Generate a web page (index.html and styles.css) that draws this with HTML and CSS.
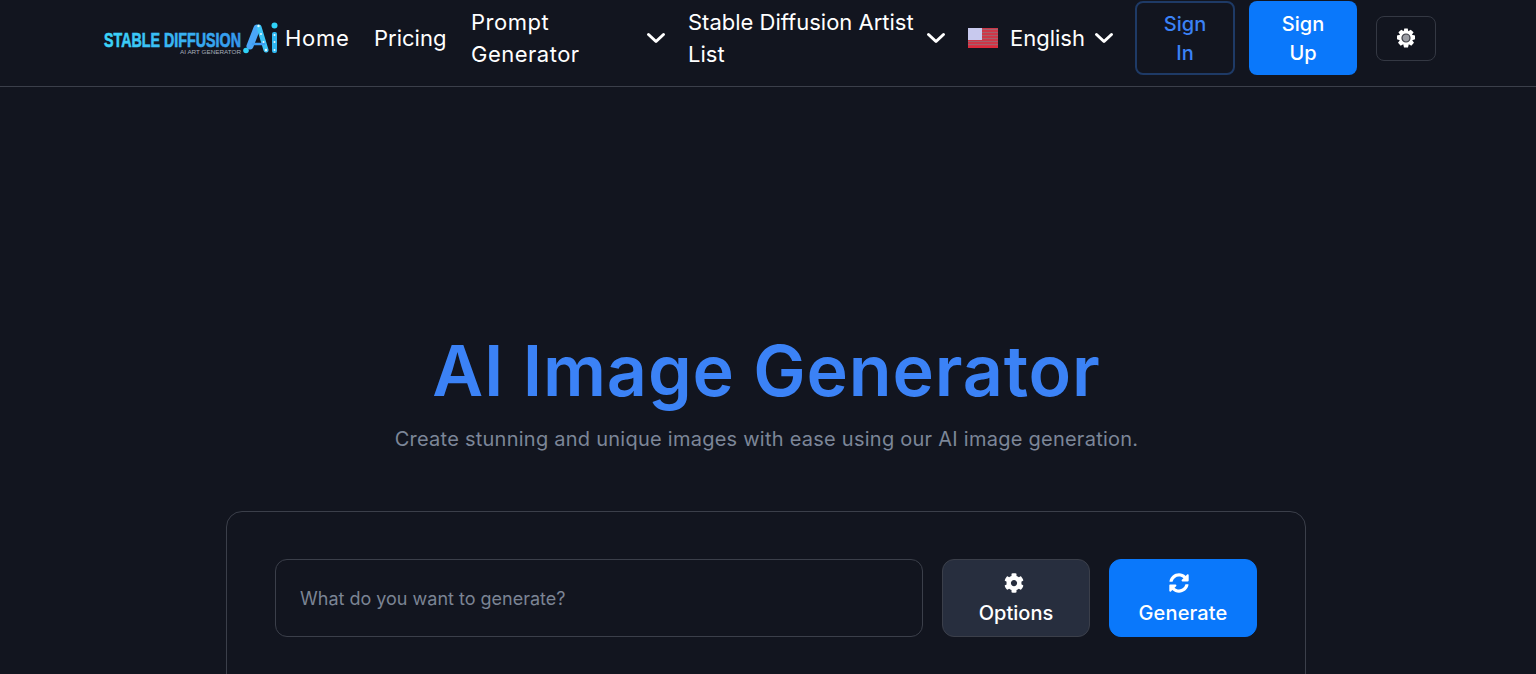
FILE: index.html
```html
<!DOCTYPE html>
<html lang="en">

<head>
  <meta charset="UTF-8">
  <meta name="viewport" content="width=device-width, initial-scale=1.0">
  <title>AI Image Generator</title>
  <link rel="stylesheet" href="styles.css">
</head>

<body>
  <svg class="icon-defs" width="0" height="0" aria-hidden="true">
    <symbol id="cog" viewBox="0 0 512 512">
      <path d="M487.4 315.7l-42.6-24.6c4.3-23.2 4.3-47 0-70.2l42.6-24.6c4.9-2.8 7.1-8.6 5.5-14-11.1-35.6-30-67.8-54.7-94.6-3.8-4.1-10-5.1-14.8-2.3L380.8 110c-17.9-15.4-38.5-27.3-60.8-35.1V25.8c0-5.6-3.9-10.5-9.4-11.7-36.7-8.2-74.3-7.8-109.2 0-5.5 1.2-9.4 6.1-9.4 11.7V75c-22.2 7.9-42.8 19.8-60.8 35.1L88.7 85.5c-4.9-2.8-11-1.9-14.8 2.3-24.7 26.7-43.6 58.9-54.7 94.6-1.7 5.4.6 11.2 5.5 14L67.3 221c-4.3 23.2-4.3 47 0 70.2l-42.6 24.6c-4.9 2.8-7.1 8.6-5.5 14 11.1 35.6 30 67.8 54.7 94.6 3.8 4.1 10 5.1 14.8 2.3l42.6-24.6c17.9 15.4 38.5 27.3 60.8 35.1v49.2c0 5.6 3.9 10.5 9.4 11.7 36.7 8.2 74.3 7.8 109.2 0 5.5-1.2 9.4-6.1 9.4-11.7v-49.2c22.2-7.9 42.8-19.8 60.8-35.1l42.6 24.6c4.9 2.8 11 1.9 14.8-2.3 24.7-26.7 43.6-58.9 54.7-94.6 1.5-5.5-.7-11.3-5.6-14.1zM256 336c-44.1 0-80-35.9-80-80s35.9-80 80-80 80 35.9 80 80-35.9 80-80 80z" fill="currentColor"/>
    </symbol>
    <symbol id="chevron" viewBox="0 0 20 12">
      <path d="M2.500 2.500L10 9.500L17.500 2.500" fill="none" stroke="currentColor" stroke-width="3" stroke-linecap="round" stroke-linejoin="round"/>
    </symbol>
  </svg>

  <header class="header">
    <a href="#" class="logo-link">
      <svg class="logo" viewBox="0 0 174 34" width="174" height="34" role="img" aria-label="Stable Diffusion AI">
        <defs>
          <linearGradient id="logo-fill" x1="0" y1="0" x2="137" y2="0" gradientUnits="userSpaceOnUse">
            <stop offset="0" stop-color="#3cd6f8"/>
            <stop offset="1" stop-color="#3598ee"/>
          </linearGradient>
        </defs>
        <text class="logo-title" transform="scale(1 1.310)" x="0" y="19.850" textLength="137" lengthAdjust="spacingAndGlyphs" fill="url(#logo-fill)" stroke="url(#logo-fill)">STABLE DIFFUSION</text>
        <text class="logo-sub" x="76" y="33" textLength="61" lengthAdjust="spacingAndGlyphs">AI ART GENERATOR</text>
        <path d="M153 7L146 25" class="logo-leg-left"/>
        <path d="M155 6L162 29" class="logo-leg-right"/>
        <path d="M149 23H160" class="logo-bar"/>
        <circle cx="154.500" cy="5" r="1.200" fill="#e8fbff"/>
        <circle cx="157" cy="13" r="1" fill="#e8fbff"/>
        <circle cx="159.500" cy="21" r="1" fill="#e8fbff"/>
        <circle cx="162" cy="29" r="1.200" fill="#e8fbff"/>
        <circle cx="142" cy="29.500" r="2.800" fill="#2fd2f7"/>
        <circle cx="170.500" cy="4.500" r="3" fill="#2fd2f7"/>
        <rect x="168" y="11" width="5" height="21" rx="2" fill="#2fb8f2"/>
        <circle cx="170.500" cy="14" r="1" fill="#e8fbff"/>
        <circle cx="170.500" cy="21" r="1" fill="#e8fbff"/>
        <circle cx="170.500" cy="29" r="1" fill="#e8fbff"/>
      </svg>
    </a>

    <nav class="nav">
      <a href="#" class="nav-link nav-home">Home</a>
      <a href="#" class="nav-link nav-pricing">Pricing</a>
      <a href="#" class="nav-link nav-prompt">
        <span class="nav-label">Prompt Generator</span>
        <svg class="chevron"><use href="#chevron"/></svg>
      </a>
      <a href="#" class="nav-link nav-artist">
        <span class="nav-label">Stable Diffusion Artist List</span>
        <svg class="chevron"><use href="#chevron"/></svg>
      </a>
      <a href="#" class="nav-link nav-lang">
        <svg class="flag" viewBox="0 0 30 20" width="30" height="20" aria-hidden="true">
          <rect width="30" height="20" fill="#dc2a3c"/>
          <path d="M0 1.500H30M0 4.500H30M0 7.500H30M0 10.500H30M0 13.500H30M0 16.500H30" stroke="#a3606c" stroke-width="1.300"/>
          <rect width="14" height="12" fill="#c8c9ee"/>
        </svg>
        <span>English</span>
        <svg class="chevron"><use href="#chevron"/></svg>
      </a>
    </nav>

    <div class="header-actions">
      <a href="#" class="btn-signin">Sign In</a>
      <a href="#" class="btn-signup">Sign Up</a>
      <button class="btn-theme" aria-label="Theme">
        <svg class="theme-icon" viewBox="0 0 20 20">
          <path d="M8.300 0.500H11.700L12.300 3.300L14.700 1.800L17.600 4.300L15.900 6.700L19 7.500V11.300L16.200 12.300L18 14.700L15.300 17.700L12.800 16.300L12 19.500H8L7.200 16.300L4.700 17.700L2 14.700L3.800 12.300L1 11.300V7.500L4.100 6.700L2.400 4.300L5.300 1.800L7.700 3.300Z" fill="#fff"/>
          <circle cx="10" cy="10" r="4" fill="#9a9ca3" stroke="#3a3c44" stroke-width="1.200"/>
        </svg>
      </button>
    </div>
  </header>

  <main class="hero">
    <h1 class="hero-title">AI Image Generator</h1>
    <p class="hero-sub">Create stunning and unique images with ease using our AI image generation.</p>

    <section class="generator">
      <div class="generator-row">
        <input class="prompt-input" type="text" placeholder="What do you want to generate?">
        <button class="btn-tool btn-options">
          <svg class="tool-icon icon-options"><use href="#cog"/></svg>
          Options
        </button>
        <button class="btn-tool btn-generate">
          <svg class="tool-icon icon-generate" viewBox="0 0 512 512"><path d="M370.72 133.28C339.458 104.008 298.888 87.962 255.848 88c-77.458.068-144.328 53.178-162.791 126.85-1.344 5.363-6.122 9.15-11.651 9.15H24.103c-7.498 0-13.194-6.807-11.807-14.176C33.933 94.924 134.813 8 256 8c66.448 0 126.791 26.136 171.315 68.685L463.03 40.97C478.149 25.851 504 36.559 504 57.941V192c0 13.255-10.745 24-24 24H345.941c-21.382 0-32.09-25.851-16.971-40.971l41.75-41.749zM32 296h134.059c21.382 0 32.09 25.851 16.971 40.971l-41.75 41.75c31.262 29.273 71.835 45.319 114.876 45.28 77.418-.07 144.315-53.144 162.787-126.849 1.344-5.363 6.122-9.15 11.651-9.15h57.304c7.498 0 13.194 6.807 11.807 14.176C478.067 417.076 377.187 504 256 504c-66.448 0-126.791-26.136-171.315-68.685L48.97 471.03C33.851 486.149 8 475.441 8 454.059V320c0-13.255 10.745-24 24-24z" fill="currentColor"/></svg>
          Generate
        </button>
      </div>
    </section>
  </main>
</body>

</html>
```

FILE: styles.css
```css
html,
body {
  height: 100%;
  overflow: hidden;
}

body {
  margin: 0;
  font-family: Inter, "Liberation Sans", sans-serif;
  background-color: #12151f;
  color: #fff;
}

a {
  color: inherit;
  text-decoration: none;
}

.icon-defs {
  display: block;
}

.header {
  height: 76px;
  display: flex;
  align-items: center;
  padding: 0 100px 10px 104px;
  border-bottom: 1px solid #3b3f4a;
}

.logo-link {
  display: block;
  width: 174px;
  height: 34px;
  flex: none;
}

.logo {
  display: block;
  overflow: visible;
}

.logo-title {
  font-family: "Liberation Sans", sans-serif;
  font-weight: 700;
  font-size: 16px;
  stroke-width: 0.5px;
}

.logo-sub {
  font-family: "Liberation Sans", sans-serif;
  font-size: 6px;
  fill: #a6aebb;
}

.logo-leg-left,
.logo-leg-right,
.logo-bar {
  fill: none;
  stroke-linecap: round;
}

.logo-leg-left {
  stroke: #4aa6f8;
  stroke-width: 7px;
}

.logo-leg-right {
  stroke: #3cc4f6;
  stroke-width: 5px;
}

.logo-bar {
  stroke: #3f9df5;
  stroke-width: 2.500px;
}

.nav {
  display: flex;
  align-items: center;
  margin-left: 8px;
  font-size: 22px;
  line-height: 32px;
}

.nav-link {
  display: flex;
  align-items: center;
  flex: none;
}

.nav-home {
  width: 65px;
  margin-left: -1px;
  margin-right: 24px;
  letter-spacing: 0.7px;
}

.nav-pricing {
  width: 73px;
  margin-right: 24px;
}

.nav-prompt {
  width: 195px;
  margin-right: 22px;
  letter-spacing: 0.5px;
}

.nav-prompt .nav-label {
  width: 125px;
  margin-right: 50px;
}

.nav-artist {
  width: 258px;
  margin-right: 22px;
}

.nav-artist .nav-label {
  width: 238px;
}

.nav-lang {
  width: 146px;
}

.flag {
  margin-right: 12px;
  flex: none;
}

.chevron {
  width: 20px;
  height: 12px;
  flex: none;
}

.nav-lang .chevron {
  margin-left: 9px;
}

.header-actions {
  display: flex;
  align-items: center;
  margin-left: 21px;
  font-size: 20px;
  line-height: 28.500px;
  font-weight: 500;
  text-align: center;
}

.btn-signin,
.btn-signup {
  box-sizing: border-box;
  height: 74px;
  border-radius: 8px;
}

.btn-signin {
  width: 100px;
  padding: 7px 20px;
  color: #3b82f6;
  border: 2px solid #1e3a66;
  margin-right: 14px;
}

.btn-signup {
  width: 108px;
  padding: 9px 30px;
  background: #0a78fb;
  margin-right: 19px;
}

.btn-theme {
  width: 60px;
  height: 45px;
  background: none;
  border: 1px solid #343843;
  border-radius: 8px;
  color: #fff;
  display: flex;
  align-items: center;
  justify-content: center;
  padding: 0;
}

.theme-icon {
  width: 20px;
  height: 20px;
}

.hero {
  text-align: center;
  padding: 242px 3px 0 0;
}

.hero-title {
  margin: 0;
  font-size: 70px;
  line-height: 84px;
  font-weight: 600;
  letter-spacing: 0.85px;
  color: #3b82f6;
}

.hero-sub {
  margin: 12px 0 0;
  font-size: 20px;
  line-height: 28px;
  letter-spacing: 0.25px;
  color: #7c8698;
}

.generator {
  box-sizing: border-box;
  width: 1080px;
  height: 400px;
  margin: 58px 0 0 226px;
  padding: 47px 48px;
  border: 1px solid #3b3f4a;
  border-radius: 16px;
}

.generator-row {
  display: flex;
  gap: 19px;
  height: 78px;
}

.prompt-input {
  flex: 1;
  min-width: 0;
  box-sizing: border-box;
  padding: 0 24px;
  background: transparent;
  border: 1px solid #3b3f4a;
  border-radius: 12px;
  font-family: inherit;
  font-size: 18px;
  color: #fff;
  outline: none;
}

.prompt-input::placeholder {
  color: #7b8494;
  opacity: 1;
}

.btn-tool {
  box-sizing: border-box;
  width: 148px;
  display: flex;
  flex-direction: column;
  align-items: center;
  justify-content: center;
  gap: 7px;
  padding: 2px 0 0;
  border-radius: 12px;
  font-family: inherit;
  font-size: 20px;
  line-height: 26px;
  font-weight: 500;
  color: #fff;
}

.btn-options {
  background: #272e3e;
  border: 1px solid #3b3f4a;
}

.btn-generate {
  background: #0a78fb;
  border: 1px solid #0a78fb;
  letter-spacing: 0.15px;
}

.tool-icon {
  width: 20px;
  height: 20px;
}

.icon-options {
  margin-right: 4px;
}

.icon-generate {
  margin-right: 8px;
}
```
